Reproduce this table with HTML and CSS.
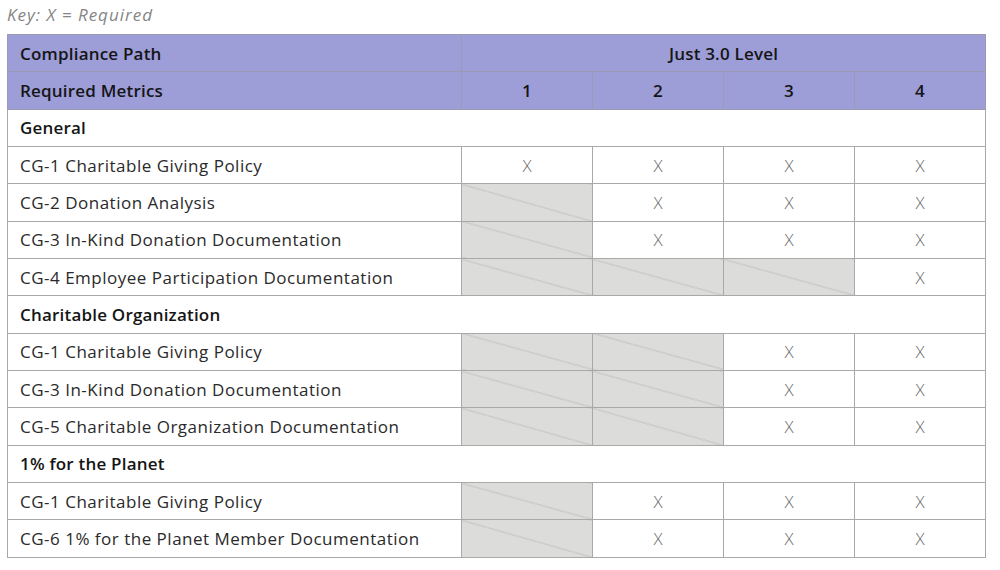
FILE: index.html
```html
<!DOCTYPE html>
<html lang="en">
<head>
<meta charset="utf-8">
<link rel="stylesheet" href="styles.css">
</head>
<body>
<p class="key">Key: X = Required</p>
<table class="grid">
  <colgroup>
    <col class="c-metric"><col class="c-lvl"><col class="c-lvl"><col class="c-lvl"><col class="c-lvl">
  </colgroup>
  <thead>
    <tr><th class="lead">Compliance Path</th><th colspan="4">Just 3.0 Level</th></tr>
    <tr><th class="lead">Required Metrics</th><th>1</th><th>2</th><th>3</th><th>4</th></tr>
  </thead>
  <tbody>
    <tr class="group"><td colspan="5">General</td></tr>
    <tr><td class="m">CG-1 Charitable Giving Policy</td><td class="x">X</td><td class="x">X</td><td class="x">X</td><td class="x">X</td></tr>
    <tr><td class="m">CG-2 Donation Analysis</td><td class="na"></td><td class="x">X</td><td class="x">X</td><td class="x">X</td></tr>
    <tr><td class="m">CG-3 In-Kind Donation Documentation</td><td class="na"></td><td class="x">X</td><td class="x">X</td><td class="x">X</td></tr>
    <tr><td class="m">CG-4 Employee Participation Documentation</td><td class="na"></td><td class="na"></td><td class="na"></td><td class="x">X</td></tr>
    <tr class="group"><td colspan="5">Charitable Organization</td></tr>
    <tr><td class="m">CG-1 Charitable Giving Policy</td><td class="na"></td><td class="na"></td><td class="x">X</td><td class="x">X</td></tr>
    <tr><td class="m">CG-3 In-Kind Donation Documentation</td><td class="na"></td><td class="na"></td><td class="x">X</td><td class="x">X</td></tr>
    <tr><td class="m">CG-5 Charitable Organization Documentation</td><td class="na"></td><td class="na"></td><td class="x">X</td><td class="x">X</td></tr>
    <tr class="group"><td colspan="5">1% for the Planet</td></tr>
    <tr><td class="m">CG-1 Charitable Giving Policy</td><td class="na"></td><td class="x">X</td><td class="x">X</td><td class="x">X</td></tr>
    <tr><td class="m">CG-6 1% for the Planet Member Documentation</td><td class="na"></td><td class="x">X</td><td class="x">X</td><td class="x">X</td></tr>
  </tbody>
</table>
</body>
</html>
```
FILE: styles.css
```css
html, body {
  margin: 0;
  padding: 0;
  background: #ffffff;
}
body {
  padding: 0 15px 0 7px;
  font-family: "Open Sans", "Liberation Sans", sans-serif;
  color: #1e1e1e;
}
.key {
  margin: 0;
  height: 34px;
  line-height: 30px;
  font-size: 17px;
  letter-spacing: 1px;
  font-style: italic;
  color: #858585;
}
.grid {
  border-collapse: collapse;
  table-layout: fixed;
  width: 978px;
  font-size: 17px;
}
.c-metric { width: 454px; }
.c-lvl { width: 131px; }
.grid th, .grid td {
  border: 1.5px solid #a9a9a9;
  height: 37.35px;
  padding: 0 12px;
  box-sizing: border-box;
  vertical-align: middle;
}
.grid th {
  background: #9d9dd8;
  font-weight: 600;
  letter-spacing: 0.2px;
  text-align: center;
  color: #151515;
  border-color: #9a9ab4;
}
.grid th.lead { text-align: left; }
.group td {
  font-weight: 600;
  letter-spacing: 0.2px;
  color: #151515;
}
.m {
  color: #2a2a2a;
  letter-spacing: 0.5px;
}
.x {
  text-align: center;
  color: #6a6a6a;
  font-weight: 300;
  font-size: 17px;
}
.na {
  background-color: #dcdcdb;
  background-image: linear-gradient(to top right, transparent calc(50% - 0.7px), #b8b8b8 50%, transparent calc(50% + 0.7px));
}
```
